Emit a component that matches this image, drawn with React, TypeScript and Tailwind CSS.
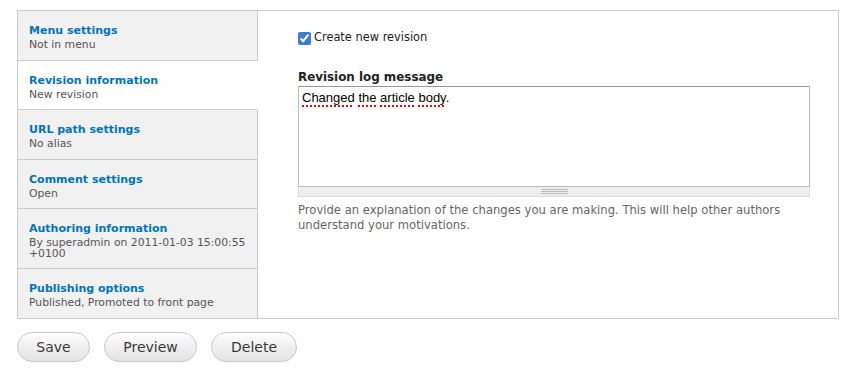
import React from 'react';

const tabs = [
  { title: 'Menu settings', summary: 'Not in menu' },
  { title: 'Revision information', summary: 'New revision', active: true },
  { title: 'URL path settings', summary: 'No alias' },
  { title: 'Comment settings', summary: 'Open' },
  { title: 'Authoring information', summary: 'By superadmin on 2011-01-03 15:00:55 +0100' },
  { title: 'Publishing options', summary: 'Published, Promoted to front page' },
];

function Tab({ title, summary, active }: { title: string; summary: string; active?: boolean }) {
  return (
    <li
      className={
        'border-b border-[#ccc] last:border-b-0 pl-[11px] pr-2 pt-[11px] pb-[9px] ' +
        (active ? 'bg-white border-r border-r-white -mr-px' : 'bg-[#f1f1f1]')
      }
    >
      <div className="text-[11px] leading-[18px] font-bold text-[#0074bd]">{title}</div>
      <div className="text-[10.8px] leading-[10.5px] text-[#555]">{summary}</div>
    </li>
  );
}

function Button({ label, w }: { label: string; w: string }) {
  return (
    <button
      className={
        'h-[30px] rounded-full border border-[#c8c8c8] bg-gradient-to-b from-[#fdfdfd] to-[#e3e3e3] text-[14px] text-[#3a3a3a] ' +
        w
      }
    >
      {label}
    </button>
  );
}

export default function App() {
  return (
    <div className="min-h-screen bg-white font-['DejaVu_Sans',sans-serif] pt-[10px] pl-[17px] pr-[20px]">
      <div className="flex border border-[#ccc] w-[822px] h-[309px]">
        <ul className="w-[240px] shrink-0 border-r border-[#ccc] bg-[#f1f1f1]">
          {tabs.map((t) => (
            <Tab key={t.title} {...t} />
          ))}
        </ul>
        <div className="flex-1 pl-[40px] pt-[19px]">
          <label className="flex items-center gap-[3px] text-[11.4px] text-[#222] h-[16px]">
            <input type="checkbox" defaultChecked className="w-[13px] h-[13px] m-0 accent-[#3b7bd0]" />
            Create new revision
          </label>
          <div className="mt-[23px] text-[11.9px] font-bold text-[#222] leading-[16px]">Revision log message</div>
          <div className="w-[512px] mt-[1px]">
            <div className="h-[101px] border border-[#bbb] border-t-[#999] bg-white px-[3px] pt-[2px] font-['Liberation_Sans',sans-serif] text-[13px] text-black leading-[18px]">
              {['Changed', 'the', 'article', 'body'].map((w, i) => (
                <React.Fragment key={w}>
                  {i > 0 && ' '}
                  <span className="underline decoration-dotted decoration-[#e00] decoration-2 underline-offset-[3px]">{w}</span>
                </React.Fragment>
              ))}
              .
            </div>
            <div className="h-[10px] bg-[#eee] border border-t-0 border-[#ddd] flex flex-col items-center justify-center gap-px">
              <div className="w-[27px] h-px bg-[#bbb]" />
              <div className="w-[27px] h-px bg-[#bbb]" />
              <div className="w-[27px] h-px bg-[#bbb]" />
            </div>
          </div>
          <p className="mt-[6px] text-[11.6px] leading-[15px] text-[#666] w-[500px]">
            Provide an explanation of the changes you are making. This will help other authors understand your motivations.
          </p>
        </div>
      </div>
      <div className="flex gap-[14px] mt-[13px]">
        <Button label="Save" w="w-[73px]" />
        <Button label="Preview" w="w-[93px]" />
        <Button label="Delete" w="w-[86px]" />
      </div>
    </div>
  );
}
